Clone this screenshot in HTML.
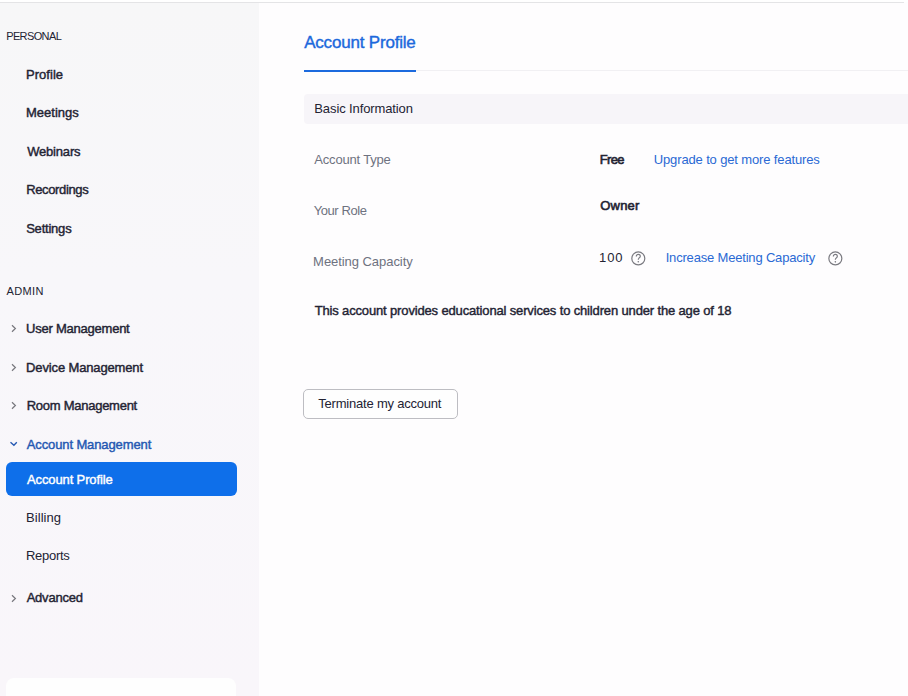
<!DOCTYPE html>
<html><head><meta charset="utf-8">
<style>
html,body{margin:0;padding:0;}
body{width:908px;height:696px;overflow:hidden;position:relative;background:#fefdfe;font-family:"Liberation Sans",sans-serif;}
.t{position:absolute;white-space:nowrap;line-height:1;}
.topstrip{position:absolute;left:0;top:0;width:908px;height:2px;background:#ffffff;}
.topline{position:absolute;left:0;top:2px;width:904px;height:1px;background:#e4e4e6;}
.sidebar{position:absolute;left:0;top:3px;width:259px;height:693px;background:linear-gradient(#f7f7f8,#f8f7fa 40%,#f9f6fa);}
.active{position:absolute;left:6px;top:462px;width:231px;height:34px;background:#0e6fea;border-radius:6px;}
.bottombox{position:absolute;left:6px;top:678px;width:230px;height:40px;background:#fefefe;border-radius:8px;}
.tabline{position:absolute;left:304px;top:70px;width:112px;height:2px;background:#1c6ade;}
.grayline{position:absolute;left:416px;top:70px;width:492px;height:1px;background:#f1f0f3;}
.bar{position:absolute;left:304px;top:94px;width:620px;height:30px;background:#f7f5f9;border-radius:4px;}
.btn{position:absolute;left:303px;top:389px;width:153px;height:28px;border:1px solid #bdbdc2;border-radius:5px;background:#fefefe;}
svg{position:absolute;}
</style></head><body>
<div class="topstrip"></div>
<div class="topline"></div>
<div class="sidebar"></div>
<div class="active"></div>
<div class="bottombox"></div>
<div class="tabline"></div>
<div class="grayline"></div>
<div class="bar"></div>
<div class="btn"></div>
<!-- chevrons -->
<svg style="left:8px;top:322px" width="12" height="14" viewBox="0 0 12 14"><path d="M4 3.2 L7.4 6.5 L4 9.8" fill="none" stroke="#78787e" stroke-width="1.2"/></svg>
<svg style="left:8px;top:361px" width="12" height="14" viewBox="0 0 12 14"><path d="M4 3.2 L7.4 6.5 L4 9.8" fill="none" stroke="#78787e" stroke-width="1.2"/></svg>
<svg style="left:8px;top:399px" width="12" height="14" viewBox="0 0 12 14"><path d="M4 3.2 L7.4 6.5 L4 9.8" fill="none" stroke="#78787e" stroke-width="1.2"/></svg>
<svg style="left:8px;top:592px" width="12" height="14" viewBox="0 0 12 14"><path d="M4 3.2 L7.4 6.5 L4 9.8" fill="none" stroke="#78787e" stroke-width="1.2"/></svg>
<svg style="left:8px;top:438px" width="12" height="12" viewBox="0 0 12 12"><path d="M2.5 4.2 L5.9 7.3 L8.8 4.2" fill="none" stroke="#2458b2" stroke-width="1.3"/></svg>
<!-- help icons -->
<svg style="left:630px;top:250px" width="18" height="18" viewBox="0 0 18 18"><g transform="translate(0.3 0.4)"><circle cx="8" cy="8" r="6.5" fill="none" stroke="#7a7a80" stroke-width="1.2"/><path d="M6.0 6.0 C6.0 4.7 6.9 4.0 8.0 4.0 C9.1 4.0 10.0 4.7 10.0 5.8 C10.0 6.8 9.3 7.3 8.7 7.7 C8.2 8.1 8.0 8.5 8.0 9.3" fill="none" stroke="#7a7a80" stroke-width="1.2"/><circle cx="8" cy="11.4" r="0.8" fill="#7a7a80"/></g></svg>
<svg style="left:827px;top:250px" width="18" height="18" viewBox="0 0 18 18"><g transform="translate(0.35 0.45)"><circle cx="8" cy="8" r="6.5" fill="none" stroke="#7a7a80" stroke-width="1.2"/><path d="M6.0 6.0 C6.0 4.7 6.9 4.0 8.0 4.0 C9.1 4.0 10.0 4.7 10.0 5.8 C10.0 6.8 9.3 7.3 8.7 7.7 C8.2 8.1 8.0 8.5 8.0 9.3" fill="none" stroke="#7a7a80" stroke-width="1.2"/><circle cx="8" cy="11.4" r="0.8" fill="#7a7a80"/></g></svg>
<div id="personal" class="t" style="left:6.16px;top:30.79px;font-size:11px;letter-spacing:-0.611px;color:#232333;font-weight:400;">PERSONAL</div>
<div id="profile" class="t" style="left:26.00px;top:67.90px;font-size:13px;letter-spacing:0.037px;color:#232333;font-weight:400;-webkit-text-stroke:0.42px currentColor;">Profile</div>
<div id="meetings" class="t" style="left:26.00px;top:106.30px;font-size:13px;letter-spacing:0.000px;color:#232333;font-weight:400;-webkit-text-stroke:0.42px currentColor;">Meetings</div>
<div id="webinars" class="t" style="left:27.16px;top:144.50px;font-size:13px;letter-spacing:-0.180px;color:#232333;font-weight:400;-webkit-text-stroke:0.42px currentColor;">Webinars</div>
<div id="recordings" class="t" style="left:26.16px;top:183.30px;font-size:13px;letter-spacing:-0.364px;color:#232333;font-weight:400;-webkit-text-stroke:0.42px currentColor;">Recordings</div>
<div id="settings" class="t" style="left:26.16px;top:221.60px;font-size:13px;letter-spacing:-0.214px;color:#232333;font-weight:400;-webkit-text-stroke:0.42px currentColor;">Settings</div>
<div id="admin" class="t" style="left:6.60px;top:285.69px;font-size:11px;letter-spacing:0.345px;color:#232333;font-weight:400;">ADMIN</div>
<div id="userm" class="t" style="left:26.12px;top:321.90px;font-size:13px;letter-spacing:-0.237px;color:#232333;font-weight:400;-webkit-text-stroke:0.42px currentColor;">User Management</div>
<div id="devm" class="t" style="left:26.12px;top:360.60px;font-size:13px;letter-spacing:-0.145px;color:#232333;font-weight:400;-webkit-text-stroke:0.42px currentColor;">Device Management</div>
<div id="roomm" class="t" style="left:26.72px;top:398.70px;font-size:13px;letter-spacing:-0.263px;color:#232333;font-weight:400;-webkit-text-stroke:0.42px currentColor;">Room Management</div>
<div id="acctm" class="t" style="left:26.68px;top:438.30px;font-size:13px;letter-spacing:-0.107px;color:#2458b2;font-weight:400;-webkit-text-stroke:0.42px currentColor;">Account Management</div>
<div id="acctp" class="t" style="left:27.04px;top:472.70px;font-size:13px;letter-spacing:-0.127px;color:#ffffff;font-weight:400;-webkit-text-stroke:0.42px currentColor;">Account Profile</div>
<div id="billing" class="t" style="left:26.00px;top:511.00px;font-size:13px;letter-spacing:0.070px;color:#232333;font-weight:400;">Billing</div>
<div id="reports" class="t" style="left:26.00px;top:549.30px;font-size:13px;letter-spacing:-0.280px;color:#232333;font-weight:400;">Reports</div>
<div id="advanced" class="t" style="left:26.68px;top:591.00px;font-size:13px;letter-spacing:-0.231px;color:#232333;font-weight:400;-webkit-text-stroke:0.42px currentColor;">Advanced</div>
<div id="title" class="t" style="left:304.16px;top:33.71px;font-size:17px;letter-spacing:-0.191px;color:#1c68dc;font-weight:400;-webkit-text-stroke:0.4px currentColor;">Account Profile</div>
<div id="basic" class="t" style="left:314.32px;top:101.50px;font-size:13px;letter-spacing:-0.111px;color:#232333;font-weight:400;">Basic Information</div>
<div id="lbl1" class="t" style="left:314.32px;top:152.70px;font-size:13px;letter-spacing:-0.184px;color:#6e7280;font-weight:400;">Account Type</div>
<div id="lbl2" class="t" style="left:313.72px;top:204.10px;font-size:13px;letter-spacing:-0.430px;color:#6e7280;font-weight:400;">Your Role</div>
<div id="lbl3" class="t" style="left:313.12px;top:255.10px;font-size:13px;letter-spacing:-0.055px;color:#6e7280;font-weight:400;">Meeting Capacity</div>
<div id="free" class="t" style="left:599.72px;top:152.70px;font-size:13px;letter-spacing:-0.660px;color:#232333;font-weight:400;-webkit-text-stroke:0.6px currentColor;">Free</div>
<div id="upg" class="t" style="left:653.76px;top:152.70px;font-size:13px;letter-spacing:-0.138px;color:#2a69d4;font-weight:400;">Upgrade to get more features</div>
<div id="owner" class="t" style="left:600.32px;top:198.50px;font-size:13px;letter-spacing:0.170px;color:#232333;font-weight:400;-webkit-text-stroke:0.6px currentColor;">Owner</div>
<div id="cap" class="t" style="left:599.12px;top:250.80px;font-size:13px;letter-spacing:0.850px;color:#232333;font-weight:400;">100</div>
<div id="inc" class="t" style="left:665.68px;top:251.20px;font-size:13px;letter-spacing:-0.183px;color:#2a69d4;font-weight:400;">Increase Meeting Capacity</div>
<div id="edu" class="t" style="left:314.68px;top:303.70px;font-size:13px;letter-spacing:-0.150px;color:#232333;font-weight:400;-webkit-text-stroke:0.42px currentColor;">This account provides educational services to children under the age of 18</div>
<div id="term" class="t" style="left:318.32px;top:396.80px;font-size:13px;letter-spacing:-0.211px;color:#232333;font-weight:400;">Terminate my account</div>
</body></html>
